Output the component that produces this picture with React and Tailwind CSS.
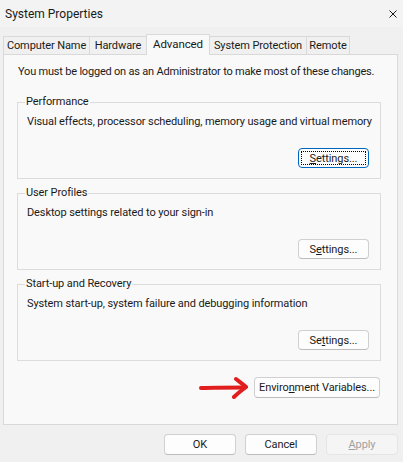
import React from "react";

const FONT = { fontFamily: 'Roboto, "Liberation Sans", sans-serif' };

function Btn({ children, focused, disabled, className = "" }) {
  return (
    <button
      className={`relative flex h-[20px] items-center justify-center whitespace-nowrap rounded-[4px] border text-[11px] leading-none tracking-[-0.1px] ${
        focused
          ? "border-[#0067c0] bg-[#fdfdfd] text-[#1a1a1a]"
          : disabled
          ? "border-[#e5e5e5] bg-[#f5f5f5] text-[#a0a0a0]"
          : "border-[#d0d0d0] border-b-[#bcbcbc] bg-[#fdfdfd] text-[#1a1a1a]"
      } ${className}`}
    >
      {focused && (
        <span className="pointer-events-none absolute inset-[2px] border border-dotted border-black" />
      )}
      <span className="relative">{children}</span>
    </button>
  );
}

function Group({ title, desc, button }) {
  return (
    <fieldset className="border border-[#dcdcdc]">
      <legend className="ml-[7px] px-[1px] text-[11px] leading-[16px] text-[#1a1a1a]">
        {title}
      </legend>
      <div className="mt-[4px] whitespace-nowrap pl-[9px] text-[11px] leading-[16px] text-[#1a1a1a]">
        {desc}
      </div>
      <div className="mt-[18px] mb-[10px] mr-[11px] flex justify-end">{button}</div>
    </fieldset>
  );
}

function Arrow() {
  return (
    <svg width="52" height="24" viewBox="0 0 52 24" className="mr-[4px]">
      <path
        d="M3 13 C16 12.5 30 12.5 47 12.5"
        stroke="#e11d1d"
        strokeWidth="4"
        strokeLinecap="round"
        fill="none"
      />
      <path
        d="M38 4 C42 7 45 9 48 12 C44 15 40 18 36 22"
        stroke="#e11d1d"
        strokeWidth="4"
        strokeLinecap="round"
        strokeLinejoin="round"
        fill="none"
      />
    </svg>
  );
}

export default function App() {
  const tabs = ["Computer Name", "Hardware", "Advanced", "System Protection", "Remote"];
  const widths = ["w-[87px]", "w-[58px]", "w-[64px]", "w-[98px]", "w-[44px]"];

  return (
    <div
      style={FONT}
      className="flex h-[462px] w-[403px] flex-col bg-[#f0f0f0] text-[11px] tracking-[-0.1px] text-[#1a1a1a]"
    >
      <div className="flex h-[27px] items-center justify-between bg-[#f3f3f3] pl-[5px] pr-[6px]">
        <span className="text-[12px] tracking-normal">System Properties</span>
        <svg width="8" height="8" viewBox="0 0 8 8">
          <path d="M0.5 0.5 L7.5 7.5 M7.5 0.5 L0.5 7.5" stroke="#1a1a1a" strokeWidth="1" />
        </svg>
      </div>

      <div className="mt-[7px] ml-[3px] flex h-[20px] items-end">
        {tabs.map((t, i) =>
          t === "Advanced" ? (
            <div
              key={t}
              className={`relative z-10 -mb-px -ml-px flex h-[21px] ${widths[i]} items-start justify-center whitespace-nowrap border border-b-0 border-[#d9d9d9] bg-[#f9f9f9] pt-[1px] text-[11.5px] leading-[16px]`}
            >
              {t}
            </div>
          ) : (
            <div
              key={t}
              className={`-ml-px first:ml-0 flex h-[18px] ${widths[i]} items-center justify-center whitespace-nowrap border border-b-0 border-[#d9d9d9] bg-[#f0f0f0] text-[11px] leading-[16px]`}
            >
              {t}
            </div>
          )
        )}
      </div>

      <div className="ml-[3px] flex h-[371px] w-[395px] flex-col border border-[#d9d9d9] bg-[#f9f9f9] px-[13px]">
        <div className="mt-[9px] whitespace-nowrap pl-[1px] leading-[16px] tracking-[-0.2px]">
          You must be logged on as an Administrator to make most of these changes.
        </div>
        <div className="mt-[14px] mr-[3px] flex flex-col gap-[6px]">
          <Group
            title="Performance"
            desc="Visual effects, processor scheduling, memory usage and virtual memory"
            button={
              <Btn focused className="w-[71px]">
                <u>S</u>ettings...
              </Btn>
            }
          />
          <Group
            title="User Profiles"
            desc="Desktop settings related to your sign-in"
            button={
              <Btn className="w-[71px]">
                S<u>e</u>ttings...
              </Btn>
            }
          />
          <Group
            title="Start-up and Recovery"
            desc="System start-up, system failure and debugging information"
            button={
              <Btn className="w-[71px]">
                Se<u>t</u>tings...
              </Btn>
            }
          />
        </div>
        <div className="mt-[14px] mr-[4px] flex items-center justify-end">
          <Arrow />
          <Btn className="h-[21px] w-[126px]">
            Enviro<u>n</u>ment Variables...
          </Btn>
        </div>
      </div>

      <div className="mt-[9px] mr-[5px] flex justify-end gap-[9px]">
        <Btn className="h-[21px] w-[72px]">OK</Btn>
        <Btn className="h-[21px] w-[72px]">Cancel</Btn>
        <Btn disabled className="h-[21px] w-[72px]">
          <u>A</u>pply
        </Btn>
      </div>
    </div>
  );
}
